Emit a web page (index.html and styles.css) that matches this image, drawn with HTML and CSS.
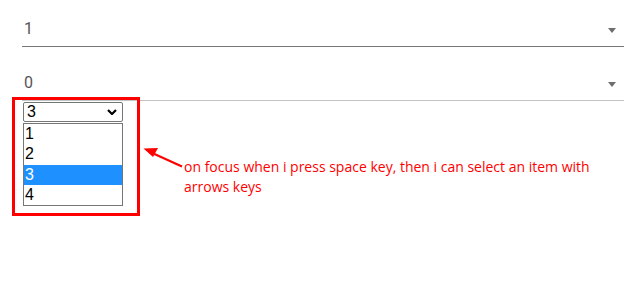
FILE: index.html
```html
<!DOCTYPE html>
<html>
<head>
<meta charset="utf-8">
<link rel="stylesheet" href="styles.css">
</head>
<body>
<div class="page">
  <div class="field first">
    <span class="value">1</span>
    <span class="caret"></span>
  </div>
  <div class="field second">
    <span class="value">0</span>
    <span class="caret"></span>
  </div>
  <div class="demo">
    <div class="native-select">
      <span>3</span>
      <svg class="chev" width="10" height="6" viewBox="0 0 10 6"><path d="M1 1 L5 5 L9 1" fill="none" stroke="#000" stroke-width="2.2"/></svg>
    </div>
    <ul class="listbox">
      <li>1</li>
      <li>2</li>
      <li class="selected">3</li>
      <li>4</li>
    </ul>
  </div>
  <div class="red-box"></div>
  <svg class="pointer" width="50" height="30" viewBox="0 0 50 30">
    <line x1="42" y1="26.5" x2="10" y2="12" stroke="#f00" stroke-width="2.2"/>
    <polygon points="3.5,8.5 18,8 13,17" fill="#f00"/>
  </svg>
  <p class="note">on focus when i press space key, then i can select an item with<br>arrows keys</p>
</div>
</body>
</html>
```

FILE: styles.css
```css
html, body {
  margin: 0;
  padding: 0;
  background: #fff;
}
.page {
  position: relative;
  width: 640px;
  height: 292px;
  padding: 18px 16px 0 22px;
  box-sizing: border-box;
  overflow: hidden;
}
.field {
  display: flex;
  justify-content: space-between;
  align-items: center;
  height: 22px;
  padding: 0 8px 6px 2px;
  font-family: Roboto, "Liberation Sans", sans-serif;
  font-size: 16px;
  line-height: 22px;
  color: #555;
}
.first {
  border-bottom: 1px solid #767676;
}
.second {
  margin-top: 25px;
  border-bottom: 1px solid #c4c4c4;
}
.caret {
  width: 0;
  height: 0;
  border-left: 4.5px solid transparent;
  border-right: 4.5px solid transparent;
  border-top: 5px solid #6e6e6e;
  margin-top: 3px;
}
.demo {
  margin: 1px 0 0 1px;
  width: 100px;
  font-family: "Liberation Sans", Arial, sans-serif;
  font-size: 16px;
}
.native-select {
  box-sizing: border-box;
  height: 20px;
  border: 1px solid #767676;
  border-radius: 2px;
  display: flex;
  align-items: center;
  justify-content: space-between;
  padding: 0 5px 0 3px;
  line-height: 18px;
  color: #000;
}
.chev {
  display: block;
}
.listbox {
  list-style: none;
  margin: 1px 0 0 0;
  padding: 0;
  box-sizing: border-box;
  border: 1px solid #767676;
  height: 83px;
}
.listbox li {
  height: 20.25px;
  line-height: 20px;
  padding-left: 1px;
  color: #000;
}
.listbox li.selected {
  background: #1e90ff;
  color: #fff;
}
.red-box {
  position: absolute;
  left: 12px;
  top: 97px;
  width: 122px;
  height: 113px;
  border: 3px solid #f00;
}
.pointer {
  position: absolute;
  left: 140px;
  top: 140px;
}
.note {
  position: absolute;
  left: 184px;
  top: 157px;
  margin: 0;
  font-family: "Open Sans", "DejaVu Sans", sans-serif;
  font-size: 14px;
  line-height: 20px;
  color: #f00;
  white-space: nowrap;
}
```
